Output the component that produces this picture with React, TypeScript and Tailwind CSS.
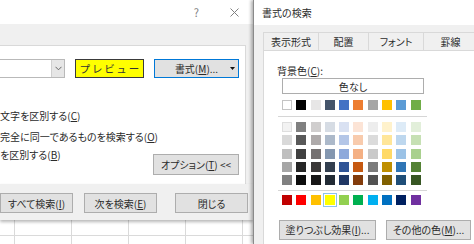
import React from 'react';

// Excel "書式の検索" colour palette
const themeRow = [
  'bg-[#ffffff] border border-[#c4c4c4]',
  'bg-[#000000]',
  'bg-[#e7e6e6]',
  'bg-[#44546a]',
  'bg-[#4472c4]',
  'bg-[#ed7d31]',
  'bg-[#a5a5a5]',
  'bg-[#ffc000]',
  'bg-[#5b9bd5]',
  'bg-[#70ad47]',
];

const tintRows = [
  ['bg-[#f2f2f2] border border-[#dedede]', 'bg-[#808080]', 'bg-[#d0cece]', 'bg-[#d6dce4]', 'bg-[#d9e1f2]', 'bg-[#fce4d6]', 'bg-[#ededed]', 'bg-[#fff2cc]', 'bg-[#ddebf7]', 'bg-[#e2efda]'],
  ['bg-[#d9d9d9]', 'bg-[#595959]', 'bg-[#aeaaaa]', 'bg-[#acb9ca]', 'bg-[#b4c6e7]', 'bg-[#f8cbad]', 'bg-[#dbdbdb]', 'bg-[#ffe699]', 'bg-[#bdd7ee]', 'bg-[#c6e0b4]'],
  ['bg-[#bfbfbf]', 'bg-[#404040]', 'bg-[#757171]', 'bg-[#8497b0]', 'bg-[#8ea9db]', 'bg-[#f4b084]', 'bg-[#c9c9c9]', 'bg-[#ffd966]', 'bg-[#9bc2e6]', 'bg-[#a9d08e]'],
  ['bg-[#a6a6a6]', 'bg-[#262626]', 'bg-[#3a3838]', 'bg-[#333f4f]', 'bg-[#305496]', 'bg-[#c65911]', 'bg-[#7b7b7b]', 'bg-[#bf8f00]', 'bg-[#2f75b5]', 'bg-[#548235]'],
  ['bg-[#808080]', 'bg-[#0d0d0d]', 'bg-[#171616]', 'bg-[#222b35]', 'bg-[#203764]', 'bg-[#833c0c]', 'bg-[#525252]', 'bg-[#806000]', 'bg-[#1f4e78]', 'bg-[#375623]'],
];

const standardRow = [
  'bg-[#c00000]',
  'bg-[#ff0000]',
  'bg-[#ffc000]',
  'bg-[#ffff00] outline outline-[#8cc4ef] outline-offset-1',
  'bg-[#92d050]',
  'bg-[#00b050]',
  'bg-[#00b0f0]',
  'bg-[#0070c0]',
  'bg-[#002060]',
  'bg-[#7030a0]',
];

const SwatchRow: React.FC<{ colors: string[] }> = ({ colors }) => (
  <div className="flex gap-x-[4.3px]">
    {colors.map((c, i) => (
      <div key={i} className={`w-[10px] h-[10px] shrink-0 ${c}`} />
    ))}
  </div>
);

const Btn: React.FC<{ className?: string; children: React.ReactNode }> = ({ className = '', children }) => (
  <div className={`flex items-center justify-center border border-[#adadad] bg-[#e1e1e1] shrink-0 whitespace-nowrap ${className}`}>
    {children}
  </div>
);

const U: React.FC<{ children: React.ReactNode }> = ({ children }) => (
  <span className="underline underline-offset-[1px]">{children}</span>
);

const LeftDialog = () => (
  <div className="w-[253px] shrink-0 flex flex-col">
    {/* title bar */}
    <div className="h-[24px] bg-white flex items-center justify-end">
      <span className="text-[11px] text-[#808080] leading-none mr-[31px]">?</span>
      <svg width="9" height="9" viewBox="0 0 9 9" className="mr-[14px]">
        <path d="M0.5 0.5 L8.5 8.5 M8.5 0.5 L0.5 8.5" stroke="#808080" strokeWidth="1" />
      </svg>
    </div>
    <div className="h-[21px] bg-[#f0f0f0]" />

    {/* options panel */}
    <div className="h-[139px] flex bg-[#f0f0f0]">
      <div className="w-[246px] bg-white border-t border-r border-[#d9d9d9] pr-[6px] flex flex-col whitespace-nowrap">
        <div className="mt-[13px] flex items-center">
          <div className="w-[65px] h-[19px] border-y border-r border-[#b9b9b9] bg-white flex justify-end">
            <div className="w-[13px] h-full bg-[#e6e6e6] border-l border-[#cfcfcf] flex items-center justify-center">
              <svg width="7" height="5" viewBox="0 0 7 5">
                <path d="M0.5 0.8 L3.5 3.8 L6.5 0.8" stroke="#666" strokeWidth="1" fill="none" />
              </svg>
            </div>
          </div>
          <div className="ml-[10px] w-[69px] h-[19px] bg-[#ffff00] border border-[#3a3a3a] flex items-center justify-center text-[10.5px] tracking-[2.8px] text-[#333] pl-[3px]">
            プレビュー
          </div>
          <div className="ml-[10px] w-[85px] h-[19px] border border-[#0078d7] bg-[#e1e1e1] flex items-center">
            <div className="flex-1 text-center pl-[8px]">
              書式(<U>M</U>)...
            </div>
            <svg width="5" height="3" viewBox="0 0 5 3" className="mr-[3px]">
              <path d="M0 0 L5 0 L2.5 3 Z" fill="#111" />
            </svg>
          </div>
        </div>

        <div className="mt-[31px] leading-[14px]">
          文字を区別する(<U>C</U>)
        </div>
        <div className="mt-[7px] leading-[14px]">
          完全に同一であるものを検索する(<U>O</U>)
        </div>
        <div className="mt-[4px] flex justify-between items-start">
          <div className="leading-[14px]">
            を区別する(<U>B</U>)
          </div>
          <Btn className="mt-[6px] w-[86px] h-[21px]">
            オプション(<U>T</U>) &lt;&lt;
          </Btn>
        </div>
      </div>
    </div>

    {/* bottom buttons */}
    <div className="h-[36px] bg-[#f0f0f0] pt-[9px] flex items-start relative z-[1] shadow-[0_2px_3px_rgba(0,0,0,0.28)]">
      <Btn className="w-[73px] h-[20px]">
        すべて検索(<U>I</U>)
      </Btn>
      <Btn className="ml-[11px] w-[73px] h-[20px]">
        次を検索(<U>E</U>)
      </Btn>
      <Btn className="ml-[18px] w-[73px] h-[20px]">閉じる</Btn>
    </div>

    {/* worksheet grid behind */}
    <div className="flex-1 bg-white flex flex-col">
      <div className="h-[16px] flex border-b border-[#dadada]">
        <div className="w-[15px] border-r border-[#dadada]" />
        <div className="w-[57px] border-r border-[#dadada]" />
        <div className="w-[57px] border-r border-[#dadada]" />
        <div className="w-[57px] border-r border-[#dadada]" />
        <div className="w-[57px] border-r border-[#dadada]" />
      </div>
      <div className="flex-1 flex">
        <div className="w-[15px] border-r border-[#dadada]" />
        <div className="w-[57px] border-r border-[#dadada]" />
        <div className="w-[57px] border-r border-[#dadada]" />
        <div className="w-[57px] border-r border-[#dadada]" />
        <div className="w-[57px] border-r border-[#dadada]" />
      </div>
    </div>
  </div>
);

const RightDialog = () => (
  <div className="flex-1 flex flex-col bg-[#f0f0f0] border-l border-[#8a8a8a] relative z-10 shadow-[-2px_0_3px_rgba(0,0,0,0.3)] whitespace-nowrap">
    <div className="h-[25px] bg-white flex items-center pl-[8px]">書式の検索</div>
    <div className="flex-1 pl-[9px] pt-[7px] flex flex-col">
      <div className="h-[18px] flex">
        <div className="w-[55px] border-t border-l border-[#d9d9d9] flex items-center justify-center">表示形式</div>
        <div className="w-[50px] border-t border-l border-[#d9d9d9] flex items-center justify-center">配置</div>
        <div className="w-[55px] border-t border-l border-[#d9d9d9] flex items-center justify-center">フォント</div>
        <div className="w-[55px] border-t border-x border-[#d9d9d9] flex items-center justify-center">罫線</div>
      </div>
      <div className="flex-1 bg-white border-t border-l border-[#d9d9d9] pl-[13px] flex flex-col">
        <div className="mt-[13px] leading-[14px]">
          背景色(<U>C</U>):
        </div>
        <div className="ml-[5px] w-[142px] h-[16px] border border-[#adadad] bg-white flex items-center justify-center">
          色なし
        </div>
        <div className="ml-[5px] mt-[6px]">
          <SwatchRow colors={themeRow} />
        </div>
        <div className="ml-[1px] mt-[6px] w-[149px] h-px bg-[#d6d6d6]" />
        <div className="ml-[5px] mt-[5px] flex flex-col gap-y-[3.3px]">
          {tintRows.map((r, i) => (
            <SwatchRow key={i} colors={r} />
          ))}
        </div>
        <div className="ml-[1px] mt-[4.7px] w-[149px] h-px bg-[#d6d6d6]" />
        <div className="ml-[5px] mt-[4px]">
          <SwatchRow colors={standardRow} />
        </div>
        <div className="ml-[2px] mt-[15px] flex">
          <Btn className="w-[97px] h-[20px]">
            塗りつぶし効果(<U>I</U>)...
          </Btn>
          <Btn className="ml-[10px] w-[85px] h-[20px]">
            その他の色(<U>M</U>)...
          </Btn>
        </div>
      </div>
    </div>
  </div>
);

export default function App() {
  return (
    <div className="w-[474px] h-[244px] overflow-hidden flex bg-white text-[10px] text-[#2b2b2b] [font-family:'Noto_Sans_CJK_JP',sans-serif] [font-feature-settings:'palt']">
      <LeftDialog />
      <RightDialog />
    </div>
  );
}
